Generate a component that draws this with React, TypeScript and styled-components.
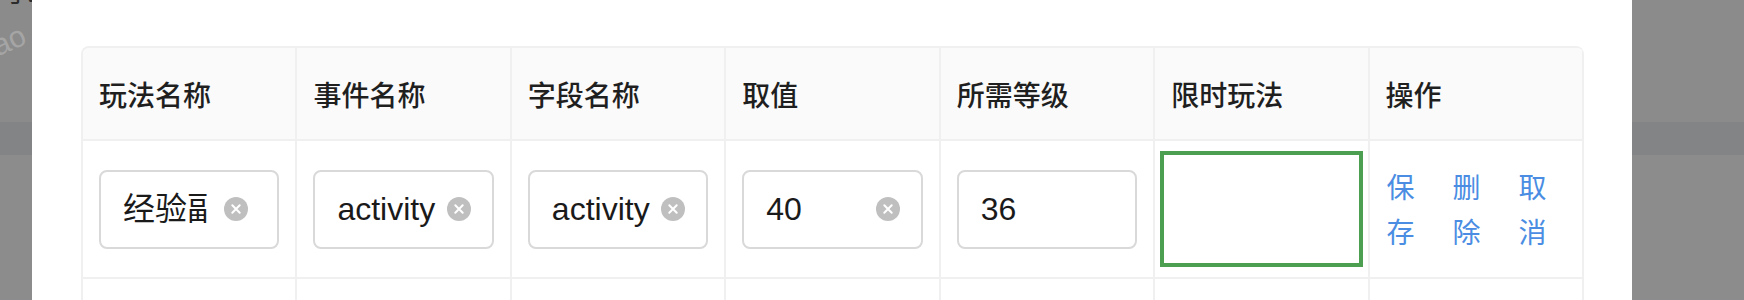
import React from 'react';
import styled, { createGlobalStyle } from 'styled-components';

const GlobalStyle = createGlobalStyle`
  html, body {
    margin: 0;
    padding: 0;
  }
  body {
    width: 1744px;
    height: 300px;
    overflow: hidden;
    font-family: "Liberation Sans", "Noto Sans CJK SC", sans-serif;
    background: linear-gradient(
      to bottom,
      #8b8b8b 0,
      #8b8b8b 122px,
      #838486 122px,
      #838486 155px,
      #8c8c8c 155px
    );
  }
`;

const Screen = styled.div`
  display: flex;
  height: 300px;
`;

const Gutter = styled.div`
  width: 32px;
  flex-shrink: 0;
  overflow: hidden;
  display: flex;
  flex-direction: column;
`;

const BehindLabel = styled.div`
  margin-top: -24px;
  margin-left: -4px;
  font-size: 28px;
  line-height: 28px;
  color: #2b2b2b;
  font-family: "Noto Sans CJK SC", sans-serif;
  white-space: nowrap;
`;

const Watermark = styled.div`
  margin-top: 36px;
  margin-left: -20px;
  font-size: 30px;
  line-height: 30px;
  color: #a5a5a5;
  white-space: nowrap;
  transform: rotate(-24deg);
  transform-origin: left bottom;
`;

const Modal = styled.div`
  width: 1600px;
  flex-shrink: 0;
  background: #fff;
  box-sizing: border-box;
  padding: 46px 48px 0 49px;
  overflow: hidden;
`;

const Table = styled.div`
  width: 1503px;
  display: grid;
  grid-template-columns: repeat(7, 1fr);
  border-top: 2px solid #f0f0f0;
  border-left: 2px solid #f0f0f0;
  border-radius: 8px 8px 0 0;
  overflow: hidden;
  box-sizing: border-box;
`;

const HeadCell = styled.div`
  height: 93px;
  box-sizing: border-box;
  padding: 0 16px;
  display: flex;
  align-items: center;
  background: #fafafa;
  border-right: 2px solid #f0f0f0;
  border-bottom: 2px solid #f0f0f0;
  font-family: "Noto Sans CJK SC", sans-serif;
  font-size: 28px;
  font-weight: 500;
  color: #1f1f1f;
`;

const Cell = styled.div<{ $pad?: string }>`
  height: 138px;
  box-sizing: border-box;
  padding: ${(p) => p.$pad ?? '0 16px'};
  display: flex;
  align-items: center;
  border-right: 2px solid #f0f0f0;
  border-bottom: 2px solid #f0f0f0;
  min-width: 0;
`;

const Field = styled.div<{ $right: number }>`
  width: 100%;
  height: 79px;
  box-sizing: border-box;
  border: 2px solid #d9d9d9;
  border-radius: 8px;
  display: flex;
  align-items: center;
  padding: 0 ${(p) => p.$right}px 0 22px;
  background: #fff;
`;

const Value = styled.span<{ $gap: number }>`
  flex: 1;
  min-width: 0;
  overflow: hidden;
  white-space: nowrap;
  margin-right: ${(p) => p.$gap}px;
  font-size: 32px;
  line-height: 44px;
  color: #1a1a1a;
  font-family: "Liberation Sans", "Noto Sans CJK SC", sans-serif;
`;

const Clear = styled.svg`
  width: 24px;
  height: 24px;
  flex-shrink: 0;
`;

const EditBox = styled.div`
  width: 100%;
  height: 116px;
  box-sizing: border-box;
  border: 4px solid #4c9f50;
  background: #fff;
`;

const Actions = styled.div`
  display: flex;
  gap: 38px;
  padding-left: 1px;
`;

const ActionLink = styled.a`
  width: 28px;
  font-family: "Noto Sans CJK SC", sans-serif;
  font-size: 28px;
  line-height: 45px;
  color: #4a8de3;
  cursor: pointer;
  word-break: break-all;
`;

const ClearIcon = () => (
  <Clear viewBox="0 0 24 24">
    <circle cx="12" cy="12" r="12" fill="#bfbfbf" />
    <path d="M8.3 8.3 L15.7 15.7 M15.7 8.3 L8.3 15.7" stroke="#fff" strokeWidth="2" strokeLinecap="round" />
  </Clear>
);

type FieldSpec = { value: string; clear: boolean; right: number; gap: number };

const headers = ['玩法名称', '事件名称', '字段名称', '取值', '所需等级', '限时玩法', '操作'];

const fields: FieldSpec[] = [
  { value: '经验副本', clear: true, right: 29, gap: 17 },
  { value: 'activity', clear: true, right: 21, gap: 5 },
  { value: 'activity', clear: true, right: 21, gap: 5 },
  { value: '40', clear: true, right: 21, gap: 8 },
  { value: '36', clear: false, right: 21, gap: 8 },
];

const App: React.FC = () => (
  <>
    <GlobalStyle />
    <Screen>
      <Gutter>
        <BehindLabel>可：</BehindLabel>
        <Watermark>xiao</Watermark>
      </Gutter>
      <Modal>
        <Table>
          {headers.map((h) => (
            <HeadCell key={h}>{h}</HeadCell>
          ))}
          {fields.map((f, i) => (
            <Cell key={i}>
              <Field $right={f.right}>
                <Value $gap={f.gap}>{f.value}</Value>
                {f.clear && <ClearIcon />}
              </Field>
            </Cell>
          ))}
          <Cell $pad="0 5px">
            <EditBox />
          </Cell>
          <Cell>
            <Actions>
              <ActionLink>保存</ActionLink>
              <ActionLink>删除</ActionLink>
              <ActionLink>取消</ActionLink>
            </Actions>
          </Cell>
          {headers.map((h) => (
            <Cell key={`next-${h}`} />
          ))}
        </Table>
      </Modal>
    </Screen>
  </>
);

export default App;
